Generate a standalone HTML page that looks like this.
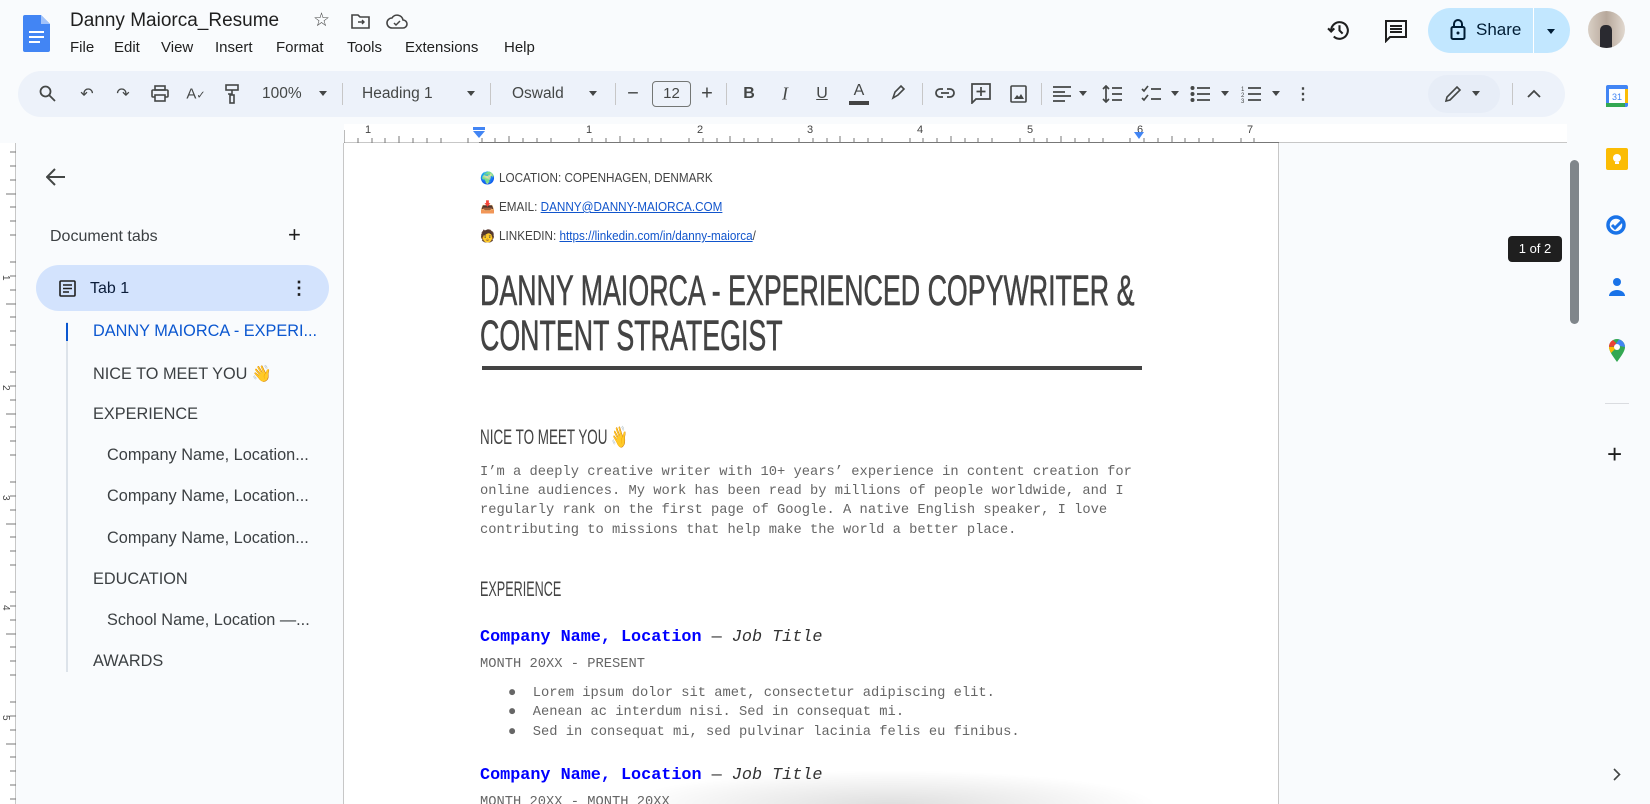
<!DOCTYPE html>
<html><head><meta charset="utf-8"><style>
*{margin:0;padding:0;box-sizing:border-box}
html,body{width:1650px;height:804px;overflow:hidden}
body{background:#f9fbfd;font-family:"Liberation Sans",sans-serif;color:#1f1f1f;position:relative}
.a{position:absolute;white-space:nowrap}
.menu span{position:absolute;top:39px;font-size:15px;color:#1f1f1f}
.tb{position:absolute;left:18px;top:71px;width:1547px;height:46px;background:#edf2fa;border-radius:23px}
.ti{position:absolute;top:94px;transform:translate(-50%,-50%);font-size:16px;color:#444746}
.sep{position:absolute;top:83px;width:1px;height:22px;background:#c7c7c7}
.dd{position:absolute;top:91px;width:0;height:0;border-left:4px solid transparent;border-right:4px solid transparent;border-top:5px solid #444746;transform:translateX(-50%)}
.side span{position:absolute;font-size:16.3px;color:#3c4043}
.cond{display:inline-block;transform-origin:0 50%;font-family:"Liberation Sans",sans-serif;color:#434343}
.p{position:absolute;left:480px;font-size:13.75px;color:#666;font-family:"Liberation Mono",monospace;white-space:nowrap}
.co{position:absolute;left:480px;font-family:"Liberation Mono",monospace;font-size:16.8px;white-space:nowrap}
.co b{color:#0000ff}
.co i{color:#333}
.rn{position:absolute;top:124px;font-size:11px;color:#444;transform:translateX(-50%)}
</style></head><body>
<!-- header -->
<svg class="a" style="left:23px;top:15px" width="27" height="37" viewBox="0 0 27 37"><path d="M2 0h16l9 9v26a2 2 0 0 1-2 2H2a2 2 0 0 1-2-2V2a2 2 0 0 1 2-2z" fill="#4285f4"/><path d="M18 0v9h9z" fill="#a1c2fa"/><rect x="6" y="16" width="15" height="2" fill="#fff"/><rect x="6" y="21" width="15" height="2" fill="#fff"/><rect x="6" y="26" width="11" height="2" fill="#fff"/></svg>
<div class="a" style="left:70px;top:10px;font-size:19px;color:#1f1f1f">Danny Maiorca_Resume</div>
<div class="a" style="left:313px;top:9px;font-size:19px;color:#444">☆</div>
<svg class="a" style="left:351px;top:13px" width="19" height="16" viewBox="0 0 19 16"><path d="M1 2h6l2 2h9v11H1z" fill="none" stroke="#444" stroke-width="1.6"/><path d="M7 9h6M11 7l2 2-2 2" stroke="#444" stroke-width="1.4" fill="none"/></svg>
<svg class="a" style="left:386px;top:13px" width="22" height="16" viewBox="0 0 22 16"><path d="M6 15a5 5 0 0 1 0-10 6 6 0 0 1 11 2 4 4 0 0 1 0 8z" fill="none" stroke="#444" stroke-width="1.6"/><path d="M8 10l2 2 4-4" stroke="#444" stroke-width="1.5" fill="none"/></svg>
<div class="menu"><span style="left:70px">File</span><span style="left:114px">Edit</span><span style="left:161px">View</span><span style="left:215px">Insert</span><span style="left:276px">Format</span><span style="left:347px">Tools</span><span style="left:405px">Extensions</span><span style="left:504px">Help</span></div>
<svg class="a" style="left:1327px;top:18px" width="25" height="25" viewBox="0 0 24 24"><path d="M4 12a8 8 0 1 1 2.5 5.8" fill="none" stroke="#1f1f1f" stroke-width="2"/><path d="M1 10l3 3 3-3" fill="none" stroke="#1f1f1f" stroke-width="2"/><path d="M12 7v5l3 3" fill="none" stroke="#1f1f1f" stroke-width="2"/></svg>
<svg class="a" style="left:1384px;top:19px" width="24" height="24" viewBox="0 0 24 24"><path d="M2 2h20v16H6l-4 4z" fill="none" stroke="#1f1f1f" stroke-width="2"/><path d="M6 7h12M6 10h12M6 13h12" stroke="#1f1f1f" stroke-width="2"/></svg>
<div class="a" style="left:1428px;top:8px;width:142px;height:45px;border-radius:23px;background:#c2e7ff"></div>
<div class="a" style="left:1533px;top:8px;width:1px;height:45px;background:#fff"></div>
<svg class="a" style="left:1450px;top:19px" width="16" height="22" viewBox="0 0 16 22"><rect x="1.5" y="8" width="13" height="12" rx="1.5" fill="none" stroke="#001d35" stroke-width="2"/><path d="M4 8V5a4 4 0 0 1 8 0v3" fill="none" stroke="#001d35" stroke-width="2"/><circle cx="8" cy="14" r="1.5" fill="#001d35"/></svg>
<div class="a" style="left:1476px;top:20px;font-size:17px;color:#001d35">Share</div>
<div class="dd" style="left:1551px;top:29px;border-top-color:#001d35"></div>
<div class="a" style="left:1588px;top:11px;width:37px;height:37px;border-radius:50%;background:linear-gradient(90deg,#d9cfc5,#b7a89b 50%,#e1d8cf);overflow:hidden"><div style="position:absolute;left:12px;top:14px;width:12px;height:23px;background:#2a2a30;border-radius:5px 5px 0 0"></div></div>
<!-- toolbar -->
<div class="tb"></div>
<svg class="a" style="left:39px;top:85px" width="17" height="17" viewBox="0 0 17 17"><circle cx="6.5" cy="6.5" r="5" fill="none" stroke="#444746" stroke-width="1.8"/><path d="M10 10l6 6" stroke="#444746" stroke-width="1.8"/></svg>
<div class="ti" style="left:87px">↶</div><div class="ti" style="left:123px">↷</div>
<svg class="a" style="left:151px;top:85px" width="18" height="17" viewBox="0 0 18 17"><rect x="4" y="1" width="10" height="4" fill="none" stroke="#444746" stroke-width="1.6"/><rect x="1" y="5" width="16" height="7" rx="1" fill="none" stroke="#444746" stroke-width="1.6"/><rect x="4" y="10" width="10" height="6" fill="#edf2fa" stroke="#444746" stroke-width="1.6"/></svg>
<div class="ti" style="left:196px;font-size:15px">A<span style="font-size:11px">✓</span></div>
<svg class="a" style="left:225px;top:84px" width="14" height="20" viewBox="0 0 14 20"><rect x="1" y="1" width="12" height="5" fill="none" stroke="#444746" stroke-width="1.6"/><path d="M7 6v4H3v0M7 10v0" stroke="#444746" fill="none" stroke-width="1.6"/><rect x="5" y="11" width="4" height="8" fill="none" stroke="#444746" stroke-width="1.6"/></svg>
<div class="a" style="left:262px;top:85px;font-size:15.5px;color:#444746">100%</div><div class="dd" style="left:323px"></div>
<div class="sep" style="left:342px"></div>
<div class="a" style="left:362px;top:85px;font-size:15.5px;color:#444746">Heading 1</div><div class="dd" style="left:471px"></div>
<div class="sep" style="left:490px"></div>
<div class="a" style="left:512px;top:85px;font-size:15.5px;color:#444746">Oswald</div><div class="dd" style="left:593px"></div>
<div class="sep" style="left:615px"></div>
<div class="ti" style="left:633px;font-size:20px">−</div>
<div class="a" style="left:652px;top:81px;width:39px;height:26px;border:1px solid #747775;border-radius:4px;font-size:15px;text-align:center;line-height:24px;color:#444746">12</div>
<div class="ti" style="left:707px;font-size:20px">+</div>
<div class="sep" style="left:726px"></div>
<div class="ti" style="left:749px;font-weight:bold">B</div>
<div class="ti" style="left:785px;font-style:italic;font-family:'Liberation Serif',serif;font-size:18px">I</div>
<div class="ti" style="left:822px;text-decoration:underline">U</div>
<div class="ti" style="left:859px;top:91px">A</div><div class="a" style="left:849px;top:101px;width:20px;height:4px;background:#444"></div>
<svg class="a" style="left:890px;top:84px" width="16" height="18" viewBox="0 0 16 18"><path d="M3 14l2-6 6-6 3 3-6 6z" fill="none" stroke="#444746" stroke-width="1.6"/></svg>
<div class="sep" style="left:922px"></div>
<svg class="a" style="left:935px;top:87px" width="20" height="12" viewBox="0 0 20 12"><path d="M8 2H5a4 4 0 0 0 0 8h3M12 2h3a4 4 0 0 1 0 8h-3M6 6h8" fill="none" stroke="#444746" stroke-width="1.8"/></svg>
<svg class="a" style="left:971px;top:83px" width="20" height="21" viewBox="0 0 20 21"><path d="M1 1h18v15H5l-4 4z" fill="none" stroke="#444746" stroke-width="1.7"/><path d="M10 4v9M5.5 8.5h9" stroke="#444746" stroke-width="1.7"/></svg>
<svg class="a" style="left:1010px;top:85px" width="17" height="18" viewBox="0 0 17 18"><rect x="1" y="1" width="15" height="16" rx="1" fill="none" stroke="#444746" stroke-width="1.6"/><path d="M4 14l3-4 2 2 2-3 3 5z" fill="#444746"/></svg>
<div class="sep" style="left:1041px"></div>
<svg class="a" style="left:1053px;top:86px" width="18" height="16" viewBox="0 0 18 16"><path d="M0 1h18M0 6h12M0 10h18M0 15h12" stroke="#444746" stroke-width="1.8"/></svg><div class="dd" style="left:1083px"></div>
<svg class="a" style="left:1102px;top:85px" width="20" height="18" viewBox="0 0 20 18"><path d="M4 1v16M1 4l3-3 3 3M1 14l3 3 3-3M10 3h10M10 9h10M10 15h10" fill="none" stroke="#444746" stroke-width="1.7"/></svg>
<svg class="a" style="left:1141px;top:85px" width="20" height="18" viewBox="0 0 20 18"><path d="M1 4l2 2 4-5M1 13l2 2 4-5M10 4h10M10 14h10" fill="none" stroke="#444746" stroke-width="1.7"/></svg><div class="dd" style="left:1175px"></div>
<svg class="a" style="left:1190px;top:85px" width="20" height="18" viewBox="0 0 20 18"><circle cx="2.5" cy="3" r="2" fill="#444746"/><circle cx="2.5" cy="9" r="2" fill="#444746"/><circle cx="2.5" cy="15" r="2" fill="#444746"/><path d="M7 3h13M7 9h13M7 15h13" stroke="#444746" stroke-width="1.8"/></svg><div class="dd" style="left:1225px"></div>
<svg class="a" style="left:1241px;top:85px" width="20" height="18" viewBox="0 0 20 18"><text x="0" y="6" font-size="6" fill="#444746">1</text><text x="0" y="12" font-size="6" fill="#444746">2</text><text x="0" y="18" font-size="6" fill="#444746">3</text><path d="M7 3h13M7 9h13M7 15h13" stroke="#444746" stroke-width="1.8"/></svg><div class="dd" style="left:1276px"></div>
<div class="ti" style="left:1303px;font-weight:bold">⋮</div>
<div class="a" style="left:1428px;top:75px;width:72px;height:38px;border-radius:19px;background:#e7edf7"></div>
<svg class="a" style="left:1444px;top:85px" width="18" height="18" viewBox="0 0 18 18"><path d="M2 16l1-4L13 2l3 3L6 15z" fill="none" stroke="#444746" stroke-width="1.6"/></svg><div class="dd" style="left:1476px"></div>
<div class="sep" style="left:1512px"></div>
<svg class="a" style="left:1527px;top:89px" width="14" height="9" viewBox="0 0 14 9"><path d="M1 8l6-6 6 6" fill="none" stroke="#444746" stroke-width="1.8"/></svg>
<!-- ruler -->
<div class="a" style="left:344px;top:124px;width:1223px;height:19px;background:#fff"></div>
<div class="a" style="left:344px;top:142px;width:1223px;height:1px;background:#c7c7c7"></div>
<svg class="a" style="left:344px;top:130px" width="935" height="13"><g stroke="#777" stroke-width="1">
<path d="M0 0v13"/>
<path d="M14 8v5M28 8v5M41 8v5M55 6v7M69 8v5M83 8v5M97 8v5M124 8v5M138 8v5M151 8v5M165 6v7M179 8v5M193 8v5M207 8v5M235 8v5M248 8v5M262 8v5M276 6v7M290 8v5M304 8v5M317 8v5M345 8v5M359 8v5M373 8v5M386 6v7M400 8v5M414 8v5M428 8v5M455 8v5M469 8v5M483 8v5M496 6v7M510 8v5M524 8v5M538 8v5M566 8v5M579 8v5M593 8v5M607 6v7M621 8v5M634 8v5M648 8v5M676 8v5M690 8v5M703 8v5M717 6v7M731 8v5M745 8v5M759 8v5M786 8v5M800 8v5M814 8v5M828 6v7M841 8v5M855 8v5M869 8v5M897 8v5M910 8v5"/></g>
<path d="M135 12.5H935" stroke="#777"/></svg>
<div class="rn" style="left:368px">1</div><div class="rn" style="left:589px">1</div><div class="rn" style="left:700px">2</div><div class="rn" style="left:810px">3</div><div class="rn" style="left:920px">4</div><div class="rn" style="left:1030px">5</div><div class="rn" style="left:1140px">6</div><div class="rn" style="left:1250px">7</div>
<div class="a" style="left:473px;top:127px;width:12px;height:3px;background:#4285f4"></div>
<div class="a" style="left:473px;top:131px;border-left:6px solid transparent;border-right:6px solid transparent;border-top:7px solid #4285f4"></div>
<div class="a" style="left:1134px;top:132px;border-left:5px solid transparent;border-right:5px solid transparent;border-top:7px solid #4285f4"></div>
<!-- vertical ruler -->
<div class="a" style="left:0;top:143px;width:16px;height:661px;background:#fff;border-right:1px solid #c7c7c7"></div>
<svg class="a" style="left:0;top:143px" width="16" height="661"><g stroke="#777">
<path d="M10 9h6M10 23h6M10 37h6M6 51h10M10 64h6M10 78h6M10 92h6M10 119h6M10 133h6M10 147h6M6 161h10M10 174h6M10 188h6M10 202h6M10 229h6M10 243h6M10 257h6M6 271h10M10 284h6M10 298h6M10 312h6M10 339h6M10 353h6M10 367h6M6 381h10M10 394h6M10 408h6M10 422h6M10 449h6M10 463h6M10 477h6M6 491h10M10 504h6M10 518h6M10 532h6M10 559h6M10 573h6M10 587h6M6 601h10M10 614h6M10 628h6M10 642h6M10 656h6"/></g>
<g font-size="10" fill="#444" font-family="Liberation Sans"><text transform="translate(3,132) rotate(90)">1</text><text transform="translate(3,242) rotate(90)">2</text><text transform="translate(3,352) rotate(90)">3</text><text transform="translate(3,462) rotate(90)">4</text><text transform="translate(3,572) rotate(90)">5</text></g></svg>
<!-- left panel -->
<div class="a" style="left:17px;top:143px;width:327px;height:661px;background:#f9fbfd;border-right:1px solid #c7c7c7"></div>
<svg class="a" style="left:46px;top:168px" width="20" height="18" viewBox="0 0 20 18"><path d="M19 9H2M9 1L1 9l8 8" fill="none" stroke="#444746" stroke-width="2"/></svg>
<div class="a" style="left:50px;top:228px;font-size:16px;color:#3c4043">Document tabs</div>
<div class="a" style="left:288px;top:222px;font-size:22px;color:#1f1f1f">+</div>
<div class="a" style="left:36px;top:265px;width:293px;height:46px;border-radius:23px;background:#d3e3fd"></div>
<svg class="a" style="left:59px;top:280px" width="17" height="17" viewBox="0 0 17 17"><rect x="1" y="1" width="15" height="15" rx="1" fill="none" stroke="#1f1f1f" stroke-width="1.6"/><path d="M4 5h9M4 8.5h9M4 12h6" stroke="#1f1f1f" stroke-width="1.5"/></svg>
<div class="a" style="left:90px;top:280px;font-size:16px;color:#0b1d3a">Tab 1</div>
<div class="a" style="left:290px;top:278px;font-size:18px;font-weight:bold;color:#1f1f1f">⋮</div>
<div class="a" style="left:66px;top:322px;width:2px;height:350px;background:#dde3ea"></div>
<div class="a" style="left:66px;top:323px;width:2px;height:18px;background:#0b57d0"></div>
<div class="side">
<span style="left:93px;top:322px;color:#0b57d0">DANNY MAIORCA - EXPERI...</span>
<span style="left:93px;top:364px">NICE TO MEET YOU 👋</span>
<span style="left:93px;top:405px">EXPERIENCE</span>
<span style="left:107px;top:446px">Company Name, Location...</span>
<span style="left:107px;top:487px">Company Name, Location...</span>
<span style="left:107px;top:529px">Company Name, Location...</span>
<span style="left:93px;top:570px">EDUCATION</span>
<span style="left:107px;top:611px">School Name, Location —...</span>
<span style="left:93px;top:652px">AWARDS</span>
</div>
<!-- page -->
<div class="a" style="left:344px;top:143px;width:935px;height:661px;background:#fff;border-right:1px solid #c7c7c7"></div>
<div class="a" style="left:480px;top:170px;font-size:13px;color:#434343"><span style="font-size:12px">🌍</span> <span class="cond" style="transform:scaleX(.9)">LOCATION: COPENHAGEN, DENMARK</span></div>
<div class="a" style="left:480px;top:199px;font-size:13px;color:#434343"><span style="font-size:12px">📥</span> <span class="cond" style="transform:scaleX(.9)">EMAIL: <u style="color:#1155cc">DANNY@DANNY-MAIORCA.COM</u></span></div>
<div class="a" style="left:480px;top:228px;font-size:13px;color:#434343"><span style="font-size:12px">🧑</span> <span class="cond" style="transform:scaleX(.9)">LINKEDIN: <u style="color:#1155cc">https://linkedin.com/in/danny-maiorca</u>/</span></div>
<div class="a" style="left:480px;top:266px;font-size:43px;line-height:50px;color:#434343"><span class="cond" style="transform:scaleX(.623);-webkit-text-stroke:0.6px #434343">DANNY MAIORCA - EXPERIENCED COPYWRITER &amp;</span></div>
<div class="a" style="left:480px;top:311px;font-size:43px;line-height:50px;color:#434343"><span class="cond" style="transform:scaleX(.623);-webkit-text-stroke:0.6px #434343">CONTENT STRATEGIST</span></div>
<div class="a" style="left:482px;top:366px;width:660px;height:4px;background:#434343"></div>
<div class="a" style="left:480px;top:426px;font-size:21px;color:#434343"><span class="cond" style="transform:scaleX(.64)">NICE TO MEET YOU <span>👋</span></span></div>
<div class="p" style="top:465px">I’m a deeply creative writer with 10+ years’ experience in content creation for</div>
<div class="p" style="top:484px">online audiences. My work has been read by millions of people worldwide, and I</div>
<div class="p" style="top:503px">regularly rank on the first page of Google. A native English speaker, I love</div>
<div class="p" style="top:523px">contributing to missions that help make the world a better place.</div>
<div class="a" style="left:480px;top:578px;font-size:21px;color:#434343"><span class="cond" style="transform:scaleX(.6)">EXPERIENCE</span></div>
<div class="co" style="top:628px"><b>Company Name, Location</b> <span style="color:#333">—</span> <i>Job Title</i></div>
<div class="p" style="top:657px">MONTH 20XX - PRESENT</div>
<div class="p" style="top:686px;left:508px">●&nbsp;&nbsp;Lorem ipsum dolor sit amet, consectetur adipiscing elit.</div>
<div class="p" style="top:705px;left:508px">●&nbsp;&nbsp;Aenean ac interdum nisi. Sed in consequat mi.</div>
<div class="p" style="top:725px;left:508px">●&nbsp;&nbsp;Sed in consequat mi, sed pulvinar lacinia felis eu finibus.</div>
<div class="co" style="top:766px"><b>Company Name, Location</b> <span style="color:#333">—</span> <i>Job Title</i></div>
<div class="p" style="top:795px">MONTH 20XX - MONTH 20XX</div>
<div class="a" style="left:620px;top:770px;width:540px;height:70px;border-radius:50%;background:radial-gradient(ellipse at center,rgba(0,0,0,.13),rgba(0,0,0,0) 70%)"></div>
<!-- scrollbar & tooltip -->
<div class="a" style="left:1570px;top:160px;width:9px;height:164px;border-radius:5px;background:#80868b"></div>
<div class="a" style="left:1508px;top:236px;width:54px;height:26px;border-radius:4px;background:#1f1f1f;color:#fff;font-size:13px;text-align:center;line-height:26px">1 of 2</div>
<!-- right sidebar -->
<div class="a" style="left:1588px;top:142px;width:62px;height:662px;background:#f9fbfd"></div>
<svg class="a" style="left:1606px;top:85px" width="22" height="22" viewBox="0 0 22 22"><rect x="0" y="0" width="22" height="22" rx="2" fill="#4285f4"/><rect x="3" y="4" width="16" height="14" fill="#fff"/><rect x="0" y="18" width="19" height="4" fill="#34a853"/><rect x="19" y="4" width="3" height="14" fill="#fbbc04"/><text x="11" y="15" font-size="9" text-anchor="middle" fill="#4285f4" font-family="Liberation Sans">31</text></svg>
<svg class="a" style="left:1606px;top:148px" width="22" height="22" viewBox="0 0 22 22"><rect width="22" height="22" rx="2" fill="#fbbc04"/><circle cx="11" cy="10" r="4" fill="#fff"/><rect x="9" y="14" width="4" height="2" fill="#fff"/></svg>
<svg class="a" style="left:1606px;top:213px" width="22" height="22" viewBox="0 0 22 22"><circle cx="10" cy="12" r="8" fill="none" stroke="#1a73e8" stroke-width="3.5"/><path d="M6 12l3 3 7-7" fill="none" stroke="#1a73e8" stroke-width="3"/></svg>
<svg class="a" style="left:1608px;top:277px" width="18" height="20" viewBox="0 0 18 20"><circle cx="9" cy="5" r="4" fill="#1a73e8"/><path d="M1 19a8 6 0 0 1 16 0z" fill="#1a73e8"/></svg>
<svg class="a" style="left:1608px;top:339px" width="18" height="24" viewBox="0 0 18 24"><path d="M9 23C4 16 1 12 1 8a8 8 0 0 1 16 0c0 4-3 8-8 15z" fill="#34a853"/><path d="M1 8a8 8 0 0 1 4-7l6 6z" fill="#ea4335"/><path d="M17 8a8 8 0 0 0-6-7.5L7 6z" fill="#4285f4"/><path d="M1 8c0 2 1 4 2 6l6-6z" fill="#fbbc04"/><circle cx="9" cy="8" r="3" fill="#fff"/></svg>
<div class="a" style="left:1605px;top:403px;width:24px;height:1px;background:#dadce0"></div>
<div class="a" style="left:1607px;top:441px;font-size:26px;color:#1f1f1f;line-height:26px">+</div>
<svg class="a" style="left:1613px;top:768px" width="8" height="13" viewBox="0 0 8 13"><path d="M1 1l5.5 5.5L1 12" fill="none" stroke="#444746" stroke-width="1.6"/></svg>
</body></html>
